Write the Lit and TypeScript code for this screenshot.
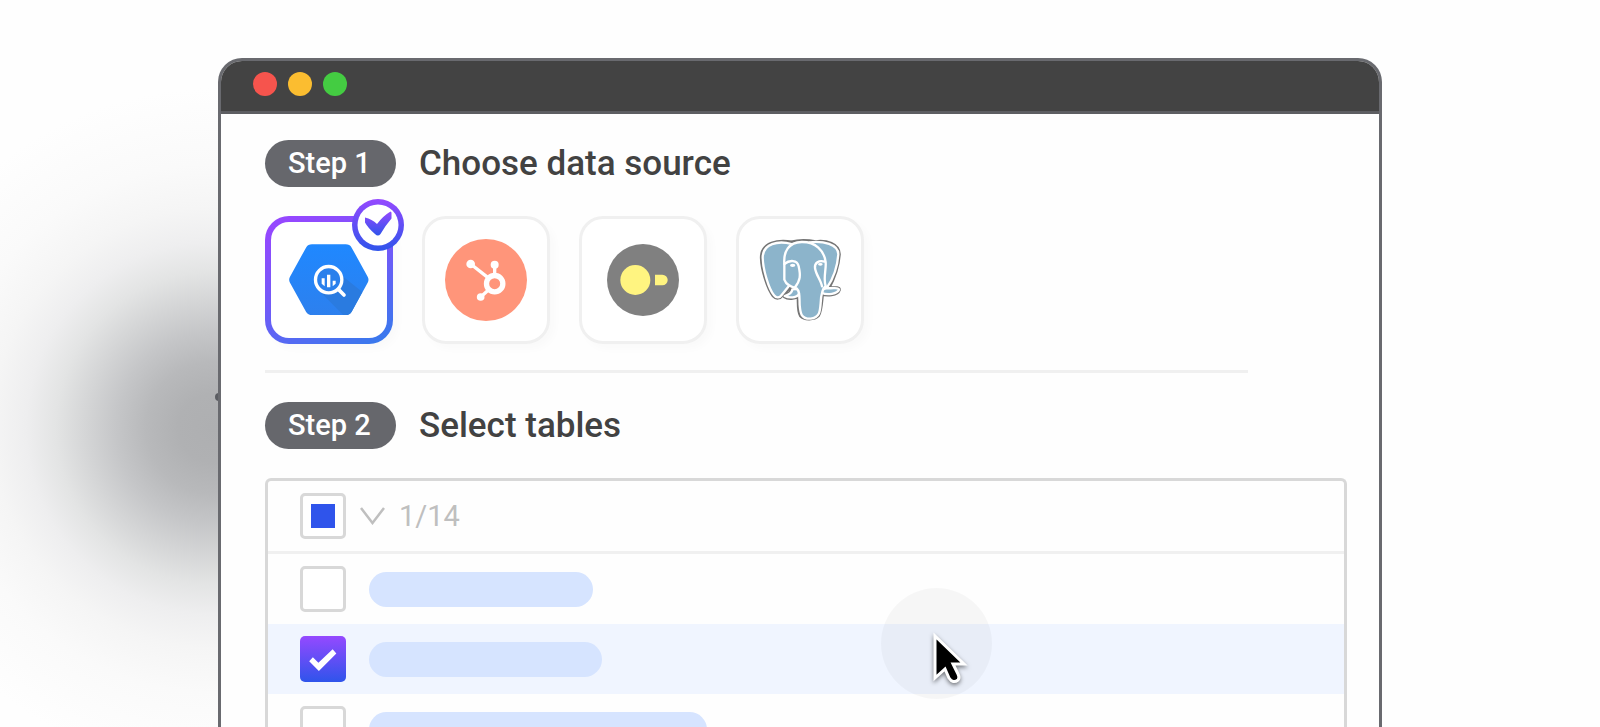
import { LitElement, html, svg, css, type TemplateResult } from "lit";
import { customElement, state } from "lit/decorators.js";
import { classMap } from "lit/directives/class-map.js";
import { styleMap } from "lit/directives/style-map.js";

interface Source {
  id: string;
  label: string;
  viewBox: string;
  art: TemplateResult;
}

interface Row {
  name: string;
  bar: number;
  checked: boolean;
}

const SOURCES: Source[] = [
  {
    id: "bigquery",
    label: "BigQuery",
    viewBox: "48 96 348 348",
    art: svg`
      <defs>
        <linearGradient id="hex" x1="0" y1="0" x2="0" y2="1">
          <stop offset="0" stop-color="#1f88ff"></stop>
          <stop offset="1" stop-color="#2d80ee"></stop>
        </linearGradient>
      </defs>
      <path fill="url(#hex)" d="M171 163H272Q284 163 290 173L338 260Q343 269 338 278L290 365Q284 375 272 375H171Q159 375 153 365L105 278Q100 269 105 260L153 173Q159 163 171 163Z"></path>
      <path fill="#2a7be0" d="M190 300L252 240L262 258L322 306L290 365Q284 375 272 375H265Z"></path>
      <circle cx="221" cy="269" r="39.500" fill="#2a80ec" stroke="#fff" stroke-width="10"></circle>
      <path d="M251 299L267 315" stroke="#fff" stroke-width="11" stroke-linecap="round"></path>
      <path fill="#fff" d="M200 265h9v24l-9-8zM216 254h10v38h-10zM233 272h9v9l-9 8z"></path>`,
  },
  {
    id: "hubspot",
    label: "HubSpot",
    viewBox: "30 42 366 366",
    art: svg`
      <circle cx="213" cy="225" r="123" fill="#ff957a"></circle>
      <g stroke="#fff" stroke-width="10" fill="none">
        <path d="M167 177L218 217M239 179V208M197 276L221 254"></path>
        <circle cx="239" cy="236" r="24.500" stroke-width="16"></circle>
      </g>
      <g fill="#fff">
        <circle cx="167" cy="177" r="13"></circle>
        <circle cx="239" cy="179" r="12"></circle>
        <circle cx="197" cy="276" r="11.500"></circle>
      </g>`,
  },
  {
    id: "duckdb",
    label: "DuckDB",
    viewBox: "36 42 366 366",
    art: svg`
      <circle cx="219" cy="225" r="108" fill="#808080"></circle>
      <circle cx="196" cy="225" r="45" fill="#fff480"></circle>
      <path fill="#fff480" d="M255 209H277A16 16 0 0 1 277 241H255Z"></path>`,
  },
  {
    id: "postgresql",
    label: "PostgreSQL",
    viewBox: "27 42 366 366",
    art: svg`
      <path stroke="#757575" stroke-width="15" stroke-linejoin="round" fill="#757575"
        d="M185 114C145 107 97 115 97 158C98 195 116 251 132 271C139 279 149 278 155 269L173 249C182 251 188 256 184 261C179 267 168 270 165 273C174 280 194 280 207 269C209 290 205 318 214 331C224 342 252 341 263 330C272 318 272 285 275 263C290 270 321 267 325 254C325 248 306 253 293 250C306 226 322 189 325 148C324 119 289 109 257 113C231 108 205 108 185 114Z"></path>
      <g stroke="#fff" stroke-width="7" stroke-linejoin="round" stroke-linecap="round" fill="#8cb4cb">
        <path d="M185 117C145 106 98 115 98 158C99 195 116 251 132 271C139 280 149 279 155 270L175 245L196 230L210 150Z"></path>
        <path d="M238 112C280 107 325 118 325 148C322 189 306 226 291 248L270 240L250 150Z"></path>
        <path d="M164 273C180 281 210 278 208 259C205 251 193 252 187 253C186 264 177 269 164 273Z"></path>
        <path d="M275 253L293 249C307 252 326 245 327 254C323 266 292 272 275 263Z"></path>
        <path d="M163 177C160 139 176 112 215 111C256 110 283 136 287 172C289 194 279 222 287 243C276 252 273 272 272 294C270 320 269 337 242 341C211 342 211 321 209 300C208 276 210 258 200 250C187 246 169 242 163 224Z"></path>
        <path fill="none" d="M163 177C179 164 202 164 206 184C212 211 212 226 194 248M285 170C266 164 253 174 255 189C258 210 273 226 276 244"></path>
      </g>
      <g fill="#fff">
        <ellipse cx="188" cy="181" rx="8" ry="5"></ellipse>
        <ellipse cx="271" cy="178" rx="7" ry="4"></ellipse>
      </g>`,
  },
];

@customElement("app-root")
export class AppRoot extends LitElement {
  @state() private source = "bigquery";
  @state() private rows: Row[] = [
    { name: "Table 1", bar: 224, checked: false },
    { name: "Table 2", bar: 233, checked: true },
    { name: "Table 3", bar: 338, checked: false },
  ];

  static styles = css`
    :host {
      display: flex;
      flex-direction: column;
      position: relative;
      box-sizing: border-box;
      height: 100vh;
      padding: 58px 218px 0;
      overflow: hidden;
      background: #fefefe radial-gradient(circle at 212px 428px,
        #aeafb1 0, #b0b1b3 34px, #b8b9bb 66px, #c5c6c8 96px, #d4d5d6 126px,
        #e3e4e4 156px, #eeeeef 186px, #f5f5f5 220px, #fafafa 264px, #fefefe 340px);
      color: #424242;
      font-family: Roboto, "Liberation Sans", sans-serif;
    }
    * { box-sizing: border-box; }
    .nub {
      position: absolute;
      left: 215px;
      top: 393px;
      width: 8px;
      height: 8px;
      border-radius: 50%;
      background: #5b5d62;
    }
    .window {
      position: relative;
      flex: 1 0 auto;
      border: 3px solid #696a6f;
      border-bottom: 0;
      border-radius: 24px 24px 0 0;
      background: #fefefe;
    }
    .titlebar {
      display: flex;
      align-items: center;
      gap: 11px;
      height: 53px;
      padding: 0 32px 4px;
      border-bottom: 3px solid #5d5e62;
      border-radius: 21px 21px 0 0;
      background: #434343;
    }
    .dot {
      width: 24px;
      height: 24px;
      border-radius: 50%;
    }
    .red { background: #f6544d; }
    .amber { background: #fbbd30; }
    .green { background: #44cc42; }
    .content { padding: 26px 32px 0 44px; }
    .step {
      display: flex;
      align-items: center;
      gap: 23px;
      height: 47px;
    }
    .pill {
      width: 131px;
      height: 47px;
      padding-left: 23px;
      border-radius: 24px;
      background: #66676c;
      color: #fff;
      font-size: 29px;
      font-weight: 500;
      line-height: 46px;
    }
    .heading {
      margin: 0;
      font-size: 35px;
      font-weight: 500;
      line-height: 48px;
    }
    .sources {
      display: flex;
      flex-wrap: wrap;
      gap: 29px;
      margin: 0 99px 0 0;
      padding: 29px 0 26px;
      border: 0;
      border-bottom: 3px solid #f0f0f0;
    }
    .card {
      position: relative;
      display: block;
      width: 128px;
      height: 128px;
      border: 3px solid #f0f0f0;
      border-radius: 24px;
      background: #fff;
      box-shadow: 5px 5px 8px rgba(0, 0, 0, 0.02);
      cursor: pointer;
    }
    .card.selected {
      border: 6px solid transparent;
      background:
        linear-gradient(#fff, #fff) padding-box,
        linear-gradient(155deg, #9548ff 8%, #705af8 50%, #347cec 100%) border-box;
    }
    .radio {
      position: absolute;
      inset: 0;
      margin: 0;
      opacity: 0;
    }
    .art {
      display: block;
      width: 100%;
      height: 100%;
    }
    .badge {
      position: absolute;
      top: -23px;
      right: -17px;
      width: 52px;
      height: 52px;
    }
    .second { margin-top: 29px; }
    .panel {
      margin-top: 29px;
      border: 3px solid #d8d8d8;
      border-bottom: 0;
      border-radius: 6px 6px 0 0;
    }
    .tables {
      width: 100%;
      border-spacing: 0;
    }
    .tables th,
    .tables td {
      height: 70px;
      padding: 0 32px;
      text-align: left;
      font-weight: 400;
    }
    .tables th {
      height: 73px;
      border-bottom: 3px solid #f0f0f0;
    }
    .line {
      display: flex;
      align-items: center;
      gap: 23px;
    }
    .head {
      gap: 14px;
    }
    .picked { background: #f0f5ff; }
    .check {
      flex: none;
      display: grid;
      appearance: none;
      width: 46px;
      height: 46px;
      margin: 0;
      border: 3px solid #d8d8d8;
      border-radius: 5px;
      background: #fff;
    }
    .check:indeterminate::after {
      content: "";
      place-self: center;
      width: 24px;
      height: 24px;
      background: #2f54eb;
    }
    .check:checked {
      border: 0;
      background: linear-gradient(#9549ff, #2f54eb);
    }
    .check:checked::after {
      content: "";
      background: #fff;
      clip-path: polygon(20% 55%, 28% 46%, 40% 58%, 71% 29%, 79% 38%, 41% 76%);
    }
    .toggle {
      display: flex;
      align-items: center;
      gap: 14px;
      padding: 0;
      border: 0;
      background: none;
      color: #bfbfbf;
      font: 400 29px/42px Roboto, "Liberation Sans", sans-serif;
    }
    .chevron {
      width: 25px;
      height: 18px;
    }
    .bar {
      height: 35px;
      border-radius: 18px;
      background: #d6e4ff;
    }
    .halo {
      position: absolute;
      left: 660px;
      top: 527px;
      width: 111px;
      height: 111px;
      border-radius: 50%;
      background: rgba(0, 0, 0, 0.03);
      pointer-events: none;
    }
    .cursor {
      position: absolute;
      left: 48px;
      top: 42px;
      width: 44px;
      height: 60px;
      filter: drop-shadow(0 2px 2px rgba(0, 0, 0, 0.5));
    }
  `;

  private toggleRow(index: number) {
    this.rows = this.rows.map((row, i) => (i === index ? { ...row, checked: !row.checked } : row));
  }

  private renderCard(source: Source) {
    const selected = source.id === this.source;
    return html`
      <label class=${classMap({ card: true, selected })}>
        <input class="radio" type="radio" name="source" aria-label=${source.label}
          .checked=${selected} @change=${() => (this.source = source.id)} />
        <svg class="art" viewBox=${source.viewBox} aria-hidden="true">${source.art}</svg>
        ${selected
          ? html`<svg class="badge" viewBox="0 0 52 52" aria-hidden="true">
              <defs>
                <linearGradient id="ring" x1="0" y1="0" x2="0" y2="1">
                  <stop offset="0" stop-color="#9549ff"></stop>
                  <stop offset="1" stop-color="#2f54eb"></stop>
                </linearGradient>
              </defs>
              <circle cx="26" cy="26" r="26" fill="url(#ring)"></circle>
              <circle cx="26" cy="26" r="20.500" fill="#fff"></circle>
              <path fill="url(#ring)" d="M13 18.500Q20 20 25 25Q31 17 38.500 12.500L39.500 13.500V19.500Q33 27 28.500 35Q26 38 23 35Q16 29 13 23.500Z"></path>
            </svg>`
          : null}
      </label>
    `;
  }

  render() {
    const count = this.rows.filter((row) => row.checked).length;
    return html`
      <span class="nub"></span>
      <main class="window">
        <header class="titlebar">
          <span class="dot red"></span>
          <span class="dot amber"></span>
          <span class="dot green"></span>
        </header>
        <div class="content">
          <div class="step">
            <span class="pill">Step 1</span>
            <h2 class="heading">Choose data source</h2>
          </div>
          <fieldset class="sources" aria-label="Data source">
            ${SOURCES.map((source) => this.renderCard(source))}
          </fieldset>
          <div class="step second">
            <span class="pill">Step 2</span>
            <h2 class="heading">Select tables</h2>
          </div>
          <div class="panel">
            <table class="tables" aria-label="Tables">
              <thead>
                <tr>
                  <th scope="col">
                    <div class="line head">
                      <input class="check" type="checkbox" aria-label="Select all tables"
                        .indeterminate=${count > 0} />
                      <button class="toggle" type="button">
                        <svg class="chevron" viewBox="0 0 25 18" fill="none" stroke="#bfbfbf" stroke-width="2.500" aria-hidden="true">
                          <path d="M1 1L12.500 16L24 1"></path>
                        </svg>
                        <span>${count}/14</span>
                      </button>
                    </div>
                  </th>
                </tr>
              </thead>
              <tbody>
                ${this.rows.map(
                  (row, i) => html`
                    <tr class=${classMap({ picked: row.checked })}>
                      <td>
                        <div class="line">
                          <input class="check" type="checkbox" aria-label=${row.name}
                            .checked=${row.checked} @change=${() => this.toggleRow(i)} />
                          <div class="bar" style=${styleMap({ width: `${row.bar}px` })}></div>
                        </div>
                      </td>
                    </tr>
                  `,
                )}
              </tbody>
            </table>
          </div>
        </div>
        <div class="halo">
          <svg class="cursor" viewBox="0 0 44 60" aria-hidden="true">
            <path fill="#000" stroke="#fff" stroke-width="3" d="M6 6V48L16 39L20 48Q24 54 29 50Q31 48 29 44L24 34H35Z"></path>
          </svg>
        </div>
      </main>
    `;
  }
}
